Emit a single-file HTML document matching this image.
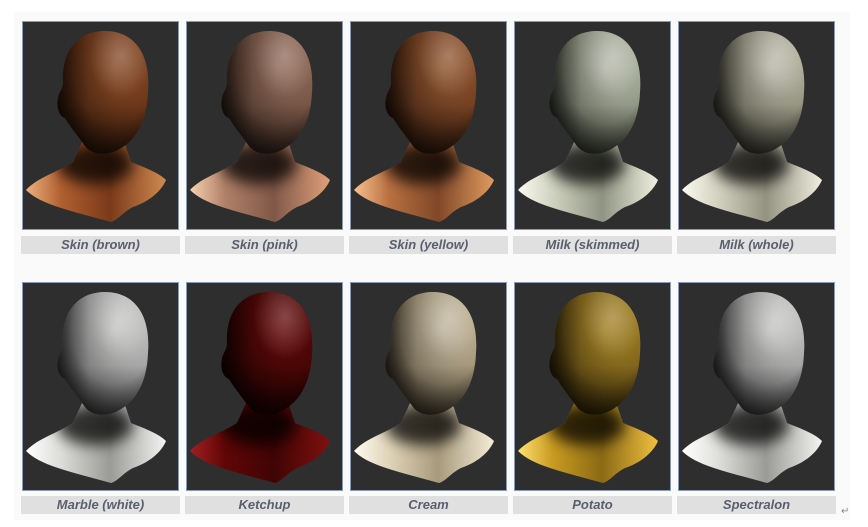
<!DOCTYPE html>
<html><head><style>
body{margin:0;width:868px;height:527px;background:#fff;position:relative;overflow:hidden;font-family:"Liberation Sans",Arial,sans-serif}
.bg{position:absolute;left:14px;top:12px;width:836px;height:508px;background:#fafafa}
.p{position:absolute;width:155px;height:207px;border:1px solid #8a9bb8;background:#2e2e2e}
.p svg{display:block}
.l{position:absolute;width:159px;height:18px;background:#e0e0e0;color:#5a5f6e;font-weight:bold;font-style:italic;font-size:13px;line-height:18px;text-align:center}
.m{position:absolute;left:841px;top:506px;font-size:10px;color:#888}
</style></head><body>
<div class="bg"></div>
<svg width="0" height="0" style="position:absolute">
<defs>
<path id="sh" d="M3 168 C15 155 35 150 50 140 L60 118 L102 122 L108 140 C120 145 135 150 143 158 C138 170 125 180 110 185 C100 190 95 198 88 200 C70 195 50 190 35 185 C20 180 10 175 3 168 Z"/>
<path id="hd" d="M40 62 C38 25 58 9 82 9 C110 9 128 30 125 70 C124 100 112 118 98 126 C86 134 70 134 62 124 C55 114 48 106 42 96 C36 94 33 85 35 76 C36 70 39 68 40 62 Z"/>
<linearGradient id="dk" x1="0" y1="0" x2="1" y2="0"><stop offset="0" stop-color="#000" stop-opacity=".7"/><stop offset=".35" stop-color="#000" stop-opacity=".25"/><stop offset="1" stop-color="#000" stop-opacity="0"/></linearGradient>
<linearGradient id="dv" x1="0" y1="0" x2="0" y2="1"><stop offset="0" stop-color="#000" stop-opacity="0"/><stop offset=".6" stop-color="#000" stop-opacity=".1"/><stop offset="1" stop-color="#000" stop-opacity=".55"/></linearGradient>
<radialGradient id="hl" cx=".7" cy=".2" r=".35"><stop offset="0" stop-color="#fff" stop-opacity=".25"/><stop offset="1" stop-color="#fff" stop-opacity="0"/></radialGradient>
<filter id="bl" x="-50%" y="-50%" width="200%" height="200%"><feGaussianBlur stdDeviation="7"/></filter>
<g id="ns"><ellipse cx="72" cy="142" rx="38" ry="20" fill="#000" opacity=".75" filter="url(#bl)"/></g>
</defs></svg>

<div class="p" style="left:22px;top:21px"><svg width="155" height="207"><defs><clipPath id="c1"><use href="#sh"/></clipPath><linearGradient id="s1" x1="0" x2="1"><stop offset="0" stop-color="#f0b080"/><stop offset=".25" stop-color="#b06030"/><stop offset=".6" stop-color="#7a3a1a"/><stop offset="1" stop-color="#d08a50"/></linearGradient><radialGradient id="h1" cx=".62" cy=".3" r=".75"><stop offset="0" stop-color="#a55a30"/><stop offset=".6" stop-color="#7a3e1c"/><stop offset="1" stop-color="#2a1408"/></radialGradient></defs><use href="#sh" fill="url(#s1)"/><g clip-path="url(#c1)"><use href="#ns"/></g><use href="#hd" fill="url(#h1)"/><use href="#hd" fill="url(#dk)"/><use href="#hd" fill="url(#dv)"/><use href="#hd" fill="url(#hl)"/></svg></div>
<div class="l" style="left:21px;top:236px">Skin (brown)</div>

<div class="p" style="left:186px;top:21px"><svg width="155" height="207"><defs><clipPath id="c2"><use href="#sh"/></clipPath><linearGradient id="s2" x1="0" x2="1"><stop offset="0" stop-color="#f8d0b0"/><stop offset=".25" stop-color="#b08068"/><stop offset=".6" stop-color="#805848"/><stop offset="1" stop-color="#e0a078"/></linearGradient><radialGradient id="h2" cx=".62" cy=".3" r=".75"><stop offset="0" stop-color="#b08470"/><stop offset=".6" stop-color="#86604e"/><stop offset="1" stop-color="#30201a"/></radialGradient></defs><use href="#sh" fill="url(#s2)"/><g clip-path="url(#c2)"><use href="#ns"/></g><use href="#hd" fill="url(#h2)"/><use href="#hd" fill="url(#dk)"/><use href="#hd" fill="url(#dv)"/><use href="#hd" fill="url(#hl)"/></svg></div>
<div class="l" style="left:185px;top:236px">Skin (pink)</div>

<div class="p" style="left:350px;top:21px"><svg width="155" height="207"><defs><clipPath id="c3"><use href="#sh"/></clipPath><linearGradient id="s3" x1="0" x2="1"><stop offset="0" stop-color="#f8c090"/><stop offset=".25" stop-color="#b87040"/><stop offset=".6" stop-color="#804828"/><stop offset="1" stop-color="#e09a60"/></linearGradient><radialGradient id="h3" cx=".62" cy=".3" r=".75"><stop offset="0" stop-color="#b06a3c"/><stop offset=".6" stop-color="#824826"/><stop offset="1" stop-color="#2e180a"/></radialGradient></defs><use href="#sh" fill="url(#s3)"/><g clip-path="url(#c3)"><use href="#ns"/></g><use href="#hd" fill="url(#h3)"/><use href="#hd" fill="url(#dk)"/><use href="#hd" fill="url(#dv)"/><use href="#hd" fill="url(#hl)"/></svg></div>
<div class="l" style="left:349px;top:236px">Skin (yellow)</div>

<div class="p" style="left:514px;top:21px"><svg width="155" height="207"><defs><clipPath id="c4"><use href="#sh"/></clipPath><linearGradient id="s4" x1="0" x2="1"><stop offset="0" stop-color="#fafaf0"/><stop offset=".25" stop-color="#d0d2c0"/><stop offset=".6" stop-color="#909482"/><stop offset="1" stop-color="#f0f0e0"/></linearGradient><radialGradient id="h4" cx=".62" cy=".3" r=".75"><stop offset="0" stop-color="#dde0d0"/><stop offset=".6" stop-color="#a4ac96"/><stop offset="1" stop-color="#383c30"/></radialGradient></defs><use href="#sh" fill="url(#s4)"/><g clip-path="url(#c4)"><use href="#ns"/></g><use href="#hd" fill="url(#h4)"/><use href="#hd" fill="url(#dk)"/><use href="#hd" fill="url(#dv)"/><use href="#hd" fill="url(#hl)"/></svg></div>
<div class="l" style="left:513px;top:236px">Milk (skimmed)</div>

<div class="p" style="left:678px;top:21px"><svg width="155" height="207"><defs><clipPath id="c5"><use href="#sh"/></clipPath><linearGradient id="s5" x1="0" x2="1"><stop offset="0" stop-color="#fafaf0"/><stop offset=".25" stop-color="#d4d2c0"/><stop offset=".6" stop-color="#949280"/><stop offset="1" stop-color="#f0eee0"/></linearGradient><radialGradient id="h5" cx=".62" cy=".3" r=".75"><stop offset="0" stop-color="#e0dece"/><stop offset=".6" stop-color="#aaa892"/><stop offset="1" stop-color="#3a3a30"/></radialGradient></defs><use href="#sh" fill="url(#s5)"/><g clip-path="url(#c5)"><use href="#ns"/></g><use href="#hd" fill="url(#h5)"/><use href="#hd" fill="url(#dk)"/><use href="#hd" fill="url(#dv)"/><use href="#hd" fill="url(#hl)"/></svg></div>
<div class="l" style="left:677px;top:236px">Milk (whole)</div>

<div class="p" style="left:22px;top:282px"><svg width="155" height="207"><defs><clipPath id="c6"><use href="#sh"/></clipPath><linearGradient id="s6" x1="0" x2="1"><stop offset="0" stop-color="#ffffff"/><stop offset=".25" stop-color="#dcdcd8"/><stop offset=".6" stop-color="#9a9a96"/><stop offset="1" stop-color="#f4f4f2"/></linearGradient><radialGradient id="h6" cx=".62" cy=".3" r=".75"><stop offset="0" stop-color="#f0f0ee"/><stop offset=".6" stop-color="#bababa"/><stop offset="1" stop-color="#404040"/></radialGradient></defs><use href="#sh" fill="url(#s6)"/><g clip-path="url(#c6)"><use href="#ns"/></g><use href="#hd" fill="url(#h6)"/><use href="#hd" fill="url(#dk)"/><use href="#hd" fill="url(#dv)"/><use href="#hd" fill="url(#hl)"/></svg></div>
<div class="l" style="left:21px;top:496px">Marble (white)</div>

<div class="p" style="left:186px;top:282px"><svg width="155" height="207"><defs><clipPath id="c7"><use href="#sh"/></clipPath><linearGradient id="s7" x1="0" x2="1"><stop offset="0" stop-color="#a02020"/><stop offset=".25" stop-color="#600606"/><stop offset=".6" stop-color="#400404"/><stop offset="1" stop-color="#801010"/></linearGradient><radialGradient id="h7" cx=".62" cy=".3" r=".75"><stop offset="0" stop-color="#7a0c0c"/><stop offset=".6" stop-color="#500606"/><stop offset="1" stop-color="#1a0000"/></radialGradient></defs><use href="#sh" fill="url(#s7)"/><g clip-path="url(#c7)"><use href="#ns"/></g><use href="#hd" fill="url(#h7)"/><use href="#hd" fill="url(#dk)"/><use href="#hd" fill="url(#dv)"/><use href="#hd" fill="url(#hl)"/></svg></div>
<div class="l" style="left:185px;top:496px">Ketchup</div>

<div class="p" style="left:350px;top:282px"><svg width="155" height="207"><defs><clipPath id="c8"><use href="#sh"/></clipPath><linearGradient id="s8" x1="0" x2="1"><stop offset="0" stop-color="#fffaf0"/><stop offset=".25" stop-color="#e0d4b8"/><stop offset=".6" stop-color="#a89a7c"/><stop offset="1" stop-color="#f4ecd8"/></linearGradient><radialGradient id="h8" cx=".62" cy=".3" r=".75"><stop offset="0" stop-color="#e8dcc0"/><stop offset=".6" stop-color="#baaa8a"/><stop offset="1" stop-color="#403828"/></radialGradient></defs><use href="#sh" fill="url(#s8)"/><g clip-path="url(#c8)"><use href="#ns"/></g><use href="#hd" fill="url(#h8)"/><use href="#hd" fill="url(#dk)"/><use href="#hd" fill="url(#dv)"/><use href="#hd" fill="url(#hl)"/></svg></div>
<div class="l" style="left:349px;top:496px">Cream</div>

<div class="p" style="left:514px;top:282px"><svg width="155" height="207"><defs><clipPath id="c9"><use href="#sh"/></clipPath><linearGradient id="s9" x1="0" x2="1"><stop offset="0" stop-color="#ffe070"/><stop offset=".25" stop-color="#c89a20"/><stop offset=".6" stop-color="#8a6a14"/><stop offset="1" stop-color="#f0c040"/></linearGradient><radialGradient id="h9" cx=".62" cy=".3" r=".75"><stop offset="0" stop-color="#c8a030"/><stop offset=".6" stop-color="#92721e"/><stop offset="1" stop-color="#302408"/></radialGradient></defs><use href="#sh" fill="url(#s9)"/><g clip-path="url(#c9)"><use href="#ns"/></g><use href="#hd" fill="url(#h9)"/><use href="#hd" fill="url(#dk)"/><use href="#hd" fill="url(#dv)"/><use href="#hd" fill="url(#hl)"/></svg></div>
<div class="l" style="left:513px;top:496px">Potato</div>

<div class="p" style="left:678px;top:282px"><svg width="155" height="207"><defs><clipPath id="c10"><use href="#sh"/></clipPath><linearGradient id="s10" x1="0" x2="1"><stop offset="0" stop-color="#ffffff"/><stop offset=".25" stop-color="#e0e0dc"/><stop offset=".6" stop-color="#9a9a96"/><stop offset="1" stop-color="#f4f4f0"/></linearGradient><radialGradient id="h10" cx=".62" cy=".3" r=".75"><stop offset="0" stop-color="#f0f0ec"/><stop offset=".6" stop-color="#bababa"/><stop offset="1" stop-color="#3a3a3a"/></radialGradient></defs><use href="#sh" fill="url(#s10)"/><g clip-path="url(#c10)"><use href="#ns"/></g><use href="#hd" fill="url(#h10)"/><use href="#hd" fill="url(#dk)"/><use href="#hd" fill="url(#dv)"/><use href="#hd" fill="url(#hl)"/></svg></div>
<div class="l" style="left:677px;top:496px">Spectralon</div>

<div class="m">↵</div>
</body></html>
